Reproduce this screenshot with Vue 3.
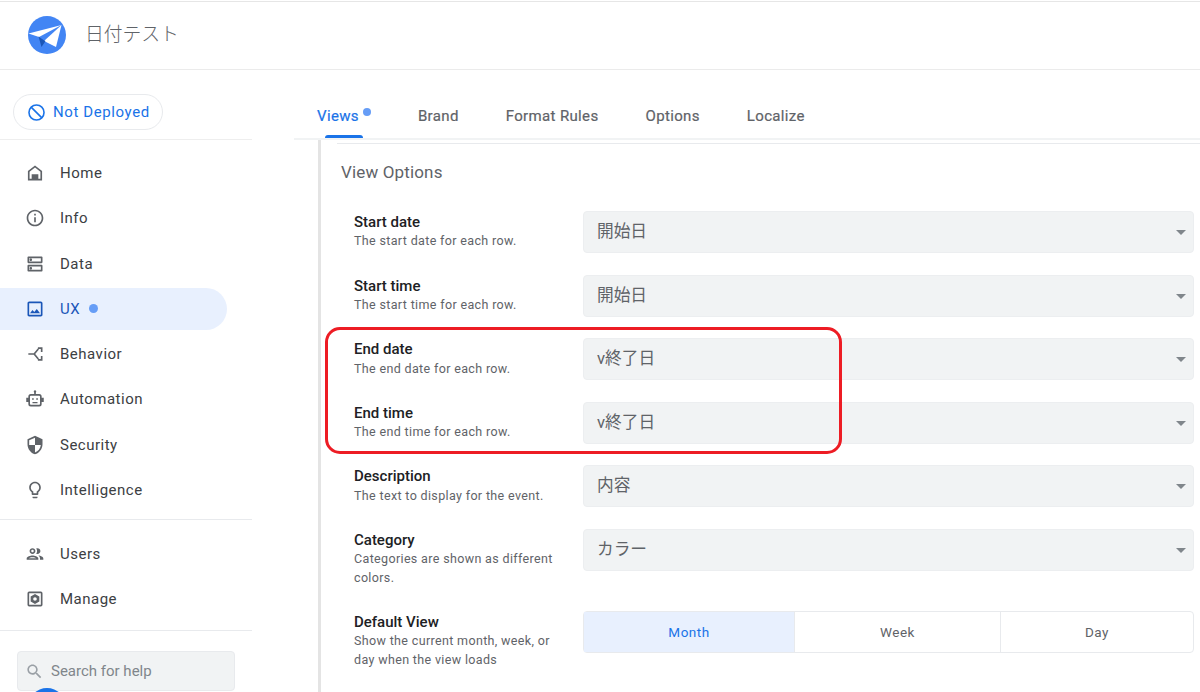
<script setup>
import { ref } from 'vue';

// material style icon paths, 24 box
const icons = {
  home: 'M12 3L3.5 9.5V21h17V9.5L12 3zm0 2.5l6.5 5V19H16v-5.5H8V19H5.500v-8.500L12 5.500z',
  info: 'M11 7h2v2h-2zm0 4h2v6h-2zm1-9C6.48 2 2 6.48 2 12s4.48 10 10 10 10-4.48 10-10S17.52 2 12 2zm0 18c-4.41 0-8-3.59-8-8s3.59-8 8-8 8 3.59 8 8-3.59 8-8 8z',
  data: 'M19 15v4H5v-4h14m1-2H4c-.55 0-1 .45-1 1v6c0 .55.45 1 1 1h16c.55 0 1-.45 1-1v-6c0-.55-.45-1-1-1zM7 18.500c-.82 0-1.500-.67-1.500-1.500s.68-1.500 1.500-1.500 1.500.67 1.500 1.500-.67 1.500-1.500 1.500zM19 5v4H5V5h14m1-2H4c-.55 0-1 .45-1 1v6c0 .55.45 1 1 1h16c.55 0 1-.45 1-1V4c0-.55-.45-1-1-1zM7 8.500c-.82 0-1.500-.67-1.500-1.500S6.180 5.500 7 5.500s1.500.68 1.500 1.500S7.830 8.500 7 8.500z',
  ux: 'M19 5v14H5V5h14m0-2H5c-1.100 0-2 .9-2 2v14c0 1.100.9 2 2 2h14c1.100 0 2-.9 2-2V5c0-1.100-.9-2-2-2zm-4.860 8.860l-3 3.870L9 13.140 6 17h12l-3.860-5.140z',
  behavior: 'M4 12h7L16 6M11 12l5 6M15.500 5H20V9.500M15.500 19H20V14.500',
  automation: 'M12 1.500a1.500 1.500 0 0 0-1 2.600V6H7a3 3 0 0 0-3 3v1.500H1.500v5H4V18a3 3 0 0 0 3 3h10a3 3 0 0 0 3-3v-2.500h2.500v-5H20V9a3 3 0 0 0-3-3h-4V4.100a1.500 1.500 0 0 0-1-2.600zM7 8h10a1 1 0 0 1 1 1v9a1 1 0 0 1-1 1H7a1 1 0 0 1-1-1V9a1 1 0 0 1 1-1zM8.500 11h2v2h-2zM13.500 11h2v2h-2zM9 15.500h6V17H9z',
  security: 'M12 1L3 5v6c0 5.550 3.840 10.740 9 12 5.160-1.260 9-6.450 9-12V5l-9-4zm0 10.990h7c-.53 4.120-3.280 7.790-7 8.940V12H5V6.300l7-3.110v8.800z',
  intelligence: 'M9 21c0 .5.4 1 1 1h4c.6 0 1-.5 1-1v-1H9v1zm3-19C8.100 2 5 5.100 5 9c0 2.400 1.200 4.500 3 5.700V17c0 .5.4 1 1 1h6c.6 0 1-.5 1-1v-2.300c1.800-1.300 3-3.400 3-5.700 0-3.900-3.100-7-7-7zm2.900 11.100l-.9.6V16h-4v-2.300l-.9-.6C7.800 12.200 7 10.600 7 9c0-2.800 2.200-5 5-5s5 2.200 5 5c0 1.600-.8 3.200-2.100 4.100z',
  users: 'M9 13.750c-2.340 0-7 1.170-7 3.500V19h14v-1.750c0-2.330-4.660-3.500-7-3.500zM4.340 17c.84-.58 2.870-1.250 4.660-1.250s3.820.67 4.660 1.250H4.340zM9 12c1.930 0 3.500-1.570 3.500-3.500S10.930 5 9 5 5.500 6.570 5.500 8.500 7.070 12 9 12zm0-5c.83 0 1.500.67 1.500 1.500S9.830 10 9 10s-1.500-.67-1.500-1.500S8.170 7 9 7zm7.040 6.810c1.160.84 1.960 1.960 1.960 3.440V19h4v-1.750c0-2.020-3.500-3.170-5.960-3.440zM15 12c1.930 0 3.500-1.570 3.500-3.500S16.930 5 15 5c-.54 0-1.040.13-1.500.35.63.89 1 1.980 1 3.150s-.37 2.260-1 3.150c.46.22.96.35 1.500.35z',
  manage: 'M5 3h14a2 2 0 0 1 2 2v14a2 2 0 0 1-2 2H5a2 2 0 0 1-2-2V5a2 2 0 0 1 2-2zM5 5v14h14V5zM12 6l5.200 3v6L12 18l-5.200-3V9zM12 9.800a2.200 2.200 0 1 0 0 4.400 2.200 2.200 0 0 0 0-4.400z',
};

const mainNav = ref([
  { name: 'Home', icon: 'home' },
  { name: 'Info', icon: 'info' },
  { name: 'Data', icon: 'data' },
  { name: 'UX', icon: 'ux', active: true },
  { name: 'Behavior', icon: 'behavior', line: true },
  { name: 'Automation', icon: 'automation' },
  { name: 'Security', icon: 'security' },
  { name: 'Intelligence', icon: 'intelligence' },
]);
const adminNav = ref([
  { name: 'Users', icon: 'users' },
  { name: 'Manage', icon: 'manage' },
]);

const tabs = ['Views', 'Brand', 'Format Rules', 'Options', 'Localize'];

const rows = [
  { label: 'Start date', desc: 'The start date for each row.', value: '開始日' },
  { label: 'Start time', desc: 'The start time for each row.', value: '開始日' },
  { label: 'End date', desc: 'The end date for each row.', value: 'v終了日' },
  { label: 'End time', desc: 'The end time for each row.', value: 'v終了日' },
  { label: 'Description', desc: 'The text to display for the event.', value: '内容' },
  { label: 'Category', desc: 'Categories are shown as different colors.', value: 'カラー' },
];

const viewModes = ['Month', 'Week', 'Day'];
const currentView = ref('Month');
</script>

<template>
  <div class="page">
    <header class="topbar">
      <svg class="logo" viewBox="0 0 38 38">
        <circle cx="19" cy="19" r="19" fill="#4285f4" />
        <path d="M0.500 17.500L33.500 9L11 21z" fill="#fff" />
        <path d="M33.500 9L28 31L16 25z" fill="#fff" />
        <path d="M10.500 20.500L13.500 31L17.500 25L15.500 24z" fill="#1a56b8" />
      </svg>
      <span class="app-name">日付テスト</span>
    </header>

    <div class="body">
      <aside class="sidebar">
        <div class="deploy-wrap">
          <div class="deploy-pill">
            <svg viewBox="0 0 24 24" class="deploy-icon">
              <circle cx="12" cy="12" r="9.500" />
              <path d="M5.200 5.200l13.600 13.600" />
            </svg>
            <span>Not Deployed</span>
          </div>
        </div>

        <nav class="nav-group first">
          <div v-for="item in mainNav" :key="item.name" class="nav-item" :class="{ active: item.active }">
            <svg viewBox="0 0 24 24" class="nav-icon">
              <path :d="icons[item.icon]" :class="item.line ? 'stroked' : 'filled'" fill-rule="evenodd" />
            </svg>
            <span>{{ item.name }}</span>
            <i v-if="item.active" class="nav-dot"></i>
          </div>
        </nav>

        <nav class="nav-group second">
          <div v-for="item in adminNav" :key="item.name" class="nav-item">
            <svg viewBox="0 0 24 24" class="nav-icon">
              <path :d="icons[item.icon]" class="filled" fill-rule="evenodd" />
            </svg>
            <span>{{ item.name }}</span>
          </div>
        </nav>

        <div class="help">
          <div class="help-search">
            <svg viewBox="0 0 24 24" class="help-icon">
              <path d="M15.500 14h-.79l-.28-.27C15.410 12.590 16 11.110 16 9.500 16 5.910 13.090 3 9.500 3S3 5.910 3 9.500 5.910 16 9.500 16c1.610 0 3.090-.59 4.230-1.570l.27.28v.79l5 4.990L20.490 19l-4.990-5zm-6 0C7.010 14 5 11.990 5 9.500S7.010 5 9.500 5 14 7.010 14 9.500 11.990 14 9.500 14z" />
            </svg>
            <span>Search for help</span>
          </div>
        </div>
        <div class="help-fab"></div>
      </aside>

      <main class="main">
        <div class="tabs">
          <div v-for="(tab, i) in tabs" :key="tab" class="tab" :class="{ active: i === 0 }">
            {{ tab }}
            <i v-if="i === 0" class="tab-dot"></i>
            <i v-if="i === 0" class="tab-line"></i>
          </div>
        </div>

        <section class="panel">
          <div class="panel-rule"></div>
          <h2 class="panel-title">View Options</h2>

          <div class="form">
            <div v-for="row in rows" :key="row.label" class="row">
              <div class="row-text">
                <div class="row-label">{{ row.label }}</div>
                <div class="row-desc">{{ row.desc }}</div>
              </div>
              <div class="select"><span class="select-value">{{ row.value }}</span></div>
            </div>

            <div class="row">
              <div class="row-text">
                <div class="row-label">Default View</div>
                <div class="row-desc">Show the current month, week, or day when the view loads</div>
              </div>
              <div class="toggle">
                <div v-for="mode in viewModes" :key="mode" class="toggle-item"
                  :class="[mode.toLowerCase(), { on: currentView === mode }]" @click="currentView = mode">
                  {{ mode }}
                </div>
              </div>
            </div>
          </div>
        </section>

        <!-- red marker drawn on top of the screenshot -->
        <div class="highlight"></div>
      </main>
    </div>
  </div>
</template>

<style scoped>
.page {
  width: 1200px;
  height: 692px;
  overflow: hidden;
  position: relative;
  background: #fff;
  font-family: Roboto, "Noto Sans CJK JP", sans-serif;
  color: #202124;
}

.topbar {
  height: 69px;
  box-sizing: border-box;
  border-top: 1px solid #e6e6e6;
  margin-top: 1px;
  border-bottom: 1px solid #ebebeb;
  display: flex;
  align-items: center;
  padding-left: 28px;
}

.logo {
  width: 38px;
  height: 38px;
  margin-bottom: 1px;
}

.app-name {
  margin: 0 0 7px 19px;
  font-size: 18.8px;
  font-weight: 300;
  color: #5f6368;
  font-family: "Noto Sans CJK JP", sans-serif;
}

.body {
  display: flex;
  height: 622px;
}

.sidebar {
  width: 252px;
  flex: none;
  position: relative;
}

.deploy-wrap {
  height: 70px;
  box-sizing: border-box;
  padding: 24px 0 0 13px;
  border-bottom: 1px solid #eeeeee;
}

.deploy-pill {
  width: 150px;
  height: 36px;
  box-sizing: border-box;
  border: 1px solid #e8eaed;
  border-radius: 18px;
  display: flex;
  align-items: center;
  padding-left: 13px;
  gap: 7px;
  color: #1a73e8;
  font-size: 15px;
  letter-spacing: 0.6px;
}

.deploy-icon {
  width: 19px;
  height: 19px;
  fill: none;
  stroke: #1a73e8;
  stroke-width: 2;
}

.nav-group {
  display: flex;
  flex-direction: column;
  gap: 3.3px;
  border-bottom: 1px solid #e8eaed;
}

.nav-group.first {
  padding: 12px 0 8px;
}

.nav-group.second {
  padding: 13px 0 10px;
}

.nav-item {
  height: 42px;
  width: 227px;
  box-sizing: border-box;
  display: flex;
  align-items: center;
  padding-left: 25px;
  font-size: 15px;
  letter-spacing: 0.5px;
  color: #3c4043;
  border-radius: 0 21px 21px 0;
}

.nav-item.active {
  background: #e8f0fe;
  color: #1a56b8;
}

.nav-icon {
  width: 20px;
  height: 20px;
  margin-right: 15px;
  flex: none;
}

.filled {
  fill: #5f6368;
}

.active .filled {
  fill: #1a56b8;
}

.stroked {
  fill: none;
  stroke: #5f6368;
  stroke-width: 2;
}

.nav-dot {
  width: 9px;
  height: 9px;
  border-radius: 50%;
  background: #669df6;
  margin-left: 9px;
}

.help {
  padding: 20px 17px 0;
}

.help-search {
  height: 40px;
  box-sizing: border-box;
  background: #f1f3f4;
  border: 1px solid #e8eaed;
  border-radius: 4px;
  display: flex;
  align-items: center;
  padding-left: 7px;
  gap: 7px;
  font-size: 15px;
  color: #80868b;
}

.help-icon {
  width: 19px;
  height: 19px;
  fill: #9aa0a6;
}

.help-fab {
  position: absolute;
  left: 28px;
  top: 618px;
  width: 38px;
  height: 38px;
  border-radius: 50%;
  background: #1a73e8;
}

.main {
  flex: 1;
  margin-left: 42px;
  min-width: 0;
  position: relative;
}

.tabs {
  height: 70px;
  box-sizing: border-box;
  border-bottom: 2px solid #f1f3f4;
  display: flex;
  gap: 47px;
  padding: 36px 0 0 23px;
}

.tab {
  position: relative;
  font-size: 15px;
  letter-spacing: 0.35px;
  color: #5f6368;
  line-height: 20px;
  height: 32px;
  -webkit-text-stroke: 0.2px currentColor;
}

.tab.active {
  color: #1a73e8;
  padding-right: 12px;
}

.tab-dot {
  position: absolute;
  left: 46px;
  top: 2px;
  width: 8px;
  height: 8px;
  border-radius: 50%;
  background: #669df6;
}

.tab-line {
  position: absolute;
  left: 8px;
  width: 38px;
  bottom: 0;
  height: 3px;
  border-radius: 3px 3px 0 0;
  background: #1a73e8;
}

.panel {
  margin: 0 0 0 24px;
  border-left: 3px solid #e4e4e4;
  height: 560px;
}

.panel-rule {
  margin-left: 16px;
  padding-top: 3px;
  border-bottom: 1px solid #e8eaed;
}

.panel-title {
  margin: 0;
  padding: 18px 0 0 20px;
  font-size: 17px;
  line-height: 20px;
  font-weight: 400;
  letter-spacing: 0.15px;
  color: #5f6368;
}

.form {
  padding: 29px 6px 0 33px;
  display: flex;
  flex-direction: column;
  gap: 21.6px;
}

.row {
  display: grid;
  grid-template-columns: 229px 1fr;
}

.row-text {
  padding: 2px 20px 2px 0;
}

.row-label {
  font-size: 15px;
  font-weight: 500;
  line-height: 18px;
  color: #202124;
}

.row-desc {
  margin-top: 1.4px;
  font-size: 12.5px;
  line-height: 18.5px;
  letter-spacing: 0.35px;
  color: #5f6368;
}

.select {
  height: 42px;
  box-sizing: border-box;
  background: #f1f3f4;
  border: 1px solid #eceef0;
  border-radius: 4px;
  padding-left: 13px;
  display: flex;
  align-items: center;
  font-size: 16.7px;
  color: #5f6368;
  position: relative;
}

.select-value {
  margin-bottom: 4px;
}

.select::after {
  content: '';
  position: absolute;
  right: 7px;
  top: 18px;
  border-left: 5px solid transparent;
  border-right: 5px solid transparent;
  border-top: 5px solid #80868b;
}

.toggle {
  height: 42px;
  box-sizing: border-box;
  display: flex;
  border: 1px solid #e8eaed;
  border-radius: 4px;
}

.toggle-item {
  display: flex;
  align-items: center;
  justify-content: center;
  font-size: 13.5px;
  letter-spacing: 0.5px;
  color: #5f6368;
  border-left: 1px solid #e8eaed;
}

.toggle-item.month {
  width: 210px;
  border-left: 0;
}

.toggle-item.week {
  width: 205px;
}

.toggle-item.day {
  flex: 1;
}

.toggle-item.on {
  background: #e8f0fe;
  color: #1a73e8;
}

.highlight {
  position: absolute;
  left: 31px;
  top: 256.5px;
  width: 516.5px;
  height: 127px;
  box-sizing: border-box;
  border: 3.5px solid #ed1c24;
  border-radius: 15px;
}
</style>

<style>
html, body {
  margin: 0;
  background: #fff;
}
</style>
